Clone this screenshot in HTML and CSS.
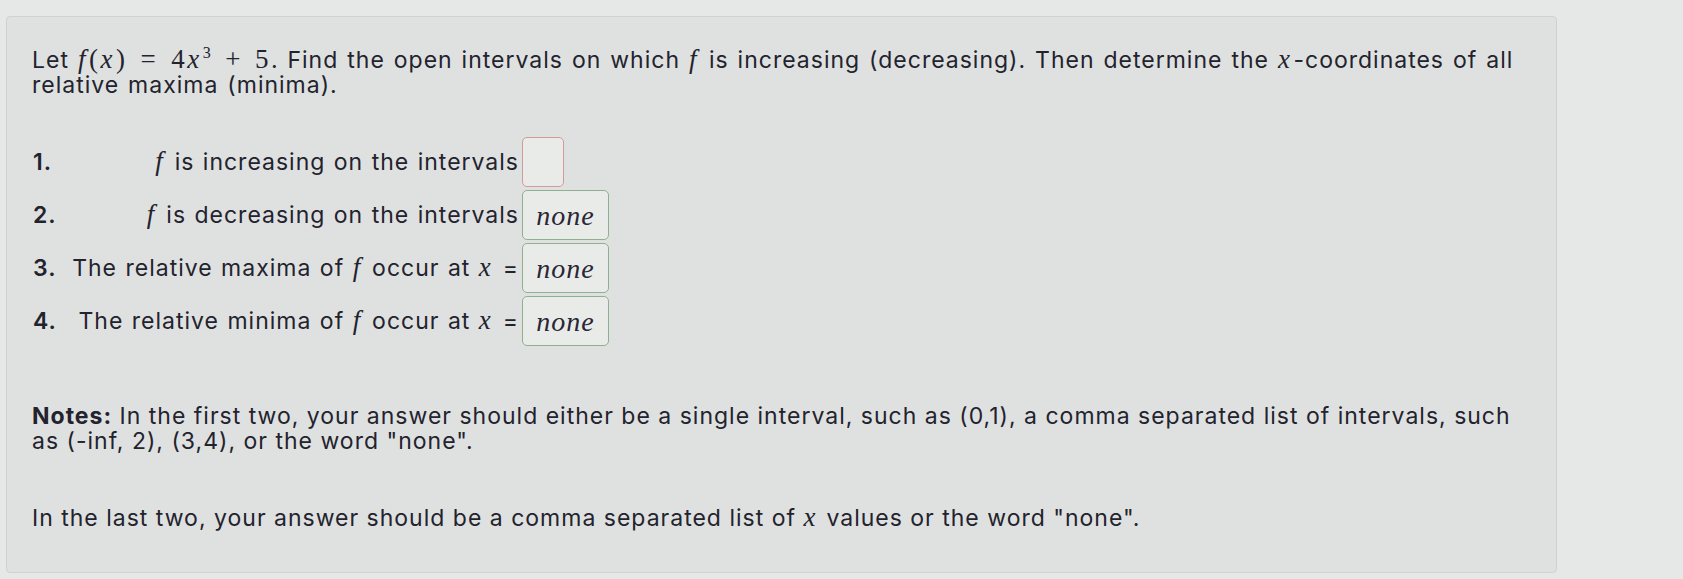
FILE: index.html
```html
<!DOCTYPE html>
<html>
<head>
<meta charset="utf-8">
<link rel="stylesheet" href="styles.css">
</head>
<body>
<div class="page">
  <div class="panel">
    <p class="intro">Let <span class="m"><i>f</i>(<i>x</i>)<span class="op">=</span>4<i>x</i><sup>3</sup><span class="op2">+</span>5</span>. Find the open intervals on which <span class="m"><i>f</i></span> is increasing (decreasing). Then determine the <span class="m"><i>x</i></span>-coordinates of all<br>relative maxima (minima).</p>
    <div class="items">
      <div class="num">1.</div>
      <div class="label"><span class="m"><i>f</i></span> is increasing on the intervals</div>
      <div class="box box-empty"></div>

      <div class="num">2.</div>
      <div class="label"><span class="m"><i>f</i></span> is decreasing on the intervals</div>
      <div class="box box-ok"><span class="ans">none</span></div>

      <div class="num">3.</div>
      <div class="label">The relative maxima of <span class="m"><i>f</i></span> occur at <span class="m"><i>x</i></span> =</div>
      <div class="box box-ok"><span class="ans">none</span></div>

      <div class="num">4.</div>
      <div class="label">The relative minima of <span class="m"><i>f</i></span> occur at <span class="m"><i>x</i></span> =</div>
      <div class="box box-ok"><span class="ans">none</span></div>
    </div>
    <p class="notes"><b>Notes:</b> In the first two, your answer should either be a single interval, such as (0,1), a comma separated list of intervals, such<br>as (-inf, 2), (3,4), or the word "none".</p>
    <p class="notes2">In the last two, your answer should be a comma separated list of <span class="m"><i>x</i></span> values or the word "none".</p>
  </div>
</div>
</body>
</html>
```

FILE: styles.css
```css
html, body {
  margin: 0;
  padding: 0;
  background: #e6e8e7;
}
.page {
  width: 1683px;
  height: 579px;
  padding: 16px 0 0 6px;
  box-sizing: border-box;
  overflow: hidden;
}
.panel {
  width: 1551px;
  height: 557px;
  box-sizing: border-box;
  background: #dfe1e0;
  border: 1px solid #cfd2d0;
  border-radius: 4px;
  padding: 30px 20px 0 25px;
  font-family: Inter, "Liberation Sans", Arial, sans-serif;
  font-size: 23px;
  letter-spacing: 1px;
  line-height: 25px;
  color: #23232e;
  white-space: nowrap;
}
.m {
  font-family: "Liberation Serif", "Times New Roman", serif;
  font-size: 27px;
  letter-spacing: 2.5px;
}
.m i {
  padding-right: 1px;
}
.op {
  margin: 0 13px;
}
.op2 {
  margin: 0 12px;
}
.m sup {
  font-size: 16px;
  line-height: 0;
}
.intro {
  margin: 0;
  word-spacing: 1.5px;
}
.items {
  margin-top: 39px;
  display: grid;
  grid-template-columns: 38px 446px auto;
  column-gap: 3px;
  row-gap: 3px;
  align-items: center;
  justify-items: start;
}
.num {
  font-weight: 600;
  padding-left: 1px;
}
.label {
  justify-self: end;
  word-spacing: 1px;
}
.box {
  height: 50px;
  box-sizing: border-box;
  border-radius: 5px;
  background: #e9ebe9;
  display: flex;
  align-items: center;
  justify-content: center;
}
.box-empty {
  width: 42px;
  border: 1.5px solid #d4999b;
}
.box-ok {
  width: 87px;
  border: 1.5px solid #8fb08f;
}
.ans {
  font-family: "Liberation Serif", "Times New Roman", serif;
  font-style: italic;
  font-size: 28px;
  letter-spacing: 1px;
  color: #2a2636;
}
.notes {
  margin: 58px 0 0 0;
}
.notes2 {
  margin: 51px 0 0 0;
}
```
